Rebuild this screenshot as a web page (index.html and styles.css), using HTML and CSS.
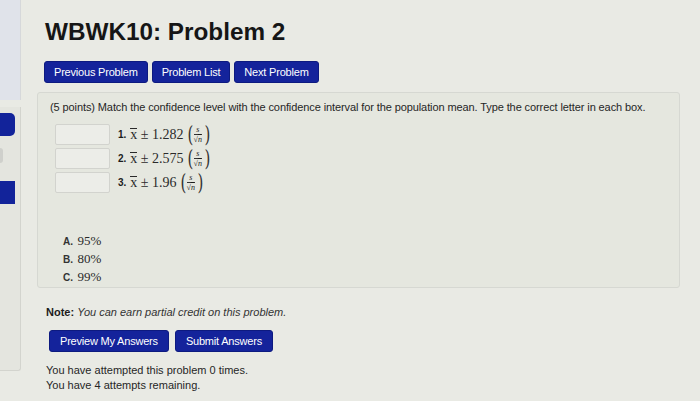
FILE: index.html
```html
<!DOCTYPE html>
<html lang="en">
<head>
    <meta charset="UTF-8">
    <title>WBWK10: Problem 2</title>
    <link rel="stylesheet" href="styles.css">
</head>
<body>
    <div class="page">
        <aside class="side">
            <div class="glare"></div>
            <div class="sidePanel">
                <div class="tab tabTop"></div>
                <div class="tab tabGray"></div>
                <div class="tab tabBottom"></div>
            </div>
        </aside>
        <main class="main">
            <h1>WBWK10: Problem 2</h1>
            <nav class="nav">
                <button class="btn">Previous Problem</button>
                <button class="btn">Problem List</button>
                <button class="btn">Next Problem</button>
            </nav>
            <section class="problem">
                <p class="prompt">(5 points) Match the confidence level with the confidence interval for the population mean. Type the correct letter in each box.</p>
                <div class="rows">
                    <div class="row">
                        <input type="text" class="answer">
                        <span class="num">1.</span>
                        <span class="math"><span class="xbar">x</span> ± 1.282</span>
                        <span class="paren">(</span>
                        <span class="frac"><span class="top">s</span><span class="bot">√<span class="ol">n</span></span></span>
                        <span class="paren">)</span>
                    </div>
                    <div class="row">
                        <input type="text" class="answer">
                        <span class="num">2.</span>
                        <span class="math"><span class="xbar">x</span> ± 2.575</span>
                        <span class="paren">(</span>
                        <span class="frac"><span class="top">s</span><span class="bot">√<span class="ol">n</span></span></span>
                        <span class="paren">)</span>
                    </div>
                    <div class="row">
                        <input type="text" class="answer">
                        <span class="num">3.</span>
                        <span class="math"><span class="xbar">x</span> ± 1.96</span>
                        <span class="paren">(</span>
                        <span class="frac"><span class="top">s</span><span class="bot">√<span class="ol">n</span></span></span>
                        <span class="paren">)</span>
                    </div>
                </div>
                <ul class="choices">
                    <li><b>A.</b> <span class="pct">95%</span></li>
                    <li><b>B.</b> <span class="pct">80%</span></li>
                    <li><b>C.</b> <span class="pct">99%</span></li>
                </ul>
            </section>
            <p class="note"><b>Note:</b> <i>You can earn partial credit on this problem.</i></p>
            <div class="submit">
                <button class="btn big">Preview My Answers</button>
                <button class="btn big">Submit Answers</button>
            </div>
            <p class="attempts">You have attempted this problem 0 times.<br>You have 4 attempts remaining.</p>
        </main>
    </div>
</body>
</html>
```

FILE: styles.css
```css
body {
    margin: 0;
    background-color: #e9eae4;
    font-family: "Liberation Sans", Arial, sans-serif;
    color: #1c1c1c;
}
.page {
    display: flex;
    width: 700px;
    height: 401px;
    overflow: hidden;
}
.side {
    width: 21px;
    flex: none;
    display: flex;
    flex-direction: column;
}
.glare {
    height: 100px;
    background-color: #e0e3ea;
    border-right: 1px solid #d6d8da;
}
.sidePanel {
    margin-top: 7px;
    height: 263px;
    background-color: #e4e5df;
    border-right: 1px solid #d3d4ce;
    border-bottom: 1px solid #d3d4ce;
    border-bottom-right-radius: 3px;
    display: flex;
    flex-direction: column;
}
.tab {
    background-color: #12239a;
}
.tabTop {
    margin-top: 6px;
    width: 15px;
    height: 23px;
    border-radius: 0 5px 5px 0;
}
.tabGray {
    margin-top: 12px;
    width: 3px;
    height: 15px;
    background-color: #cfd0cc;
    border-radius: 0 3px 3px 0;
}
.tabBottom {
    margin-top: 18px;
    width: 15px;
    height: 23px;
}
.main {
    margin-left: 16px;
    width: 643px;
}
h1 {
    margin: 18px 0 0 8px;
    font-size: 24.3px;
    line-height: 28px;
    color: #161616;
}
.nav {
    margin: 15px 0 0 7px;
    display: flex;
    gap: 4px;
}
.btn {
    background-color: #14239b;
    color: #fff;
    border: 1px solid #0d1a80;
    border-radius: 3px;
    font-family: "Liberation Sans", Arial, sans-serif;
    font-size: 11px;
    height: 22px;
    padding: 0 9px;
    letter-spacing: -0.2px;
}
.problem {
    margin-top: 9px;
    height: 196px;
    box-sizing: border-box;
    background-color: #e5e7df;
    border: 1px solid #d6d8d2;
    border-radius: 3px;
    padding: 7px 12px;
}
.prompt {
    margin: 0;
    font-size: 11px;
    line-height: 14px;
    letter-spacing: -0.1px;
    color: #262626;
}
.rows {
    margin: 10px 0 0 5px;
    display: flex;
    flex-direction: column;
    gap: 3px;
}
.row {
    display: flex;
    align-items: center;
    height: 21px;
}
.answer {
    width: 55px;
    height: 21px;
    box-sizing: border-box;
    margin: 0 8px 0 0;
    border: 1px solid #d2d3ce;
    border-radius: 2px;
    background-color: #ecede8;
}
.num {
    font-size: 10px;
    font-weight: bold;
    margin-right: 4px;
}
.math {
    font-family: "Liberation Serif", "Times New Roman", serif;
    font-size: 14px;
    color: #2a2a2a;
}
.xbar {
    display: inline-block;
    border-top: 1px solid #2a2a2a;
    line-height: 9px;
    padding-top: 1px;
}
.paren {
    font-family: "DejaVu Serif", serif;
    font-size: 23px;
    font-weight: 200;
    line-height: 20px;
    margin: -2px 0 0 2px;
    transform: scaleX(0.65);
    color: #333;
}
.frac {
    display: inline-flex;
    flex-direction: column;
    align-items: center;
    font-family: "Liberation Serif", serif;
    font-style: italic;
    font-size: 8px;
    line-height: 9px;
    margin: 0 -1px;
}
.top {
    border-bottom: 1px solid #333;
    padding: 0 2px;
}
.ol {
    text-decoration: overline;
}
.choices {
    list-style: none;
    margin: 39px 0 0 13px;
    padding: 0;
}
.choices li {
    line-height: 16px;
}
.choices b {
    font-size: 10px;
    color: #333;
}
.pct {
    font-family: "Liberation Serif", "Times New Roman", serif;
    font-size: 13px;
    color: #2a2a2a;
}
.note {
    margin: 17px 0 0 9px;
    font-size: 11px;
    line-height: 14px;
}
.note i {
    color: #333;
}
.submit {
    margin: 11px 0 0 12px;
    display: flex;
    gap: 6px;
}
.big {
    padding: 0 10px;
}
.attempts {
    margin: 11px 0 0 9px;
    font-size: 11px;
    line-height: 15px;
    color: #262626;
}
```
